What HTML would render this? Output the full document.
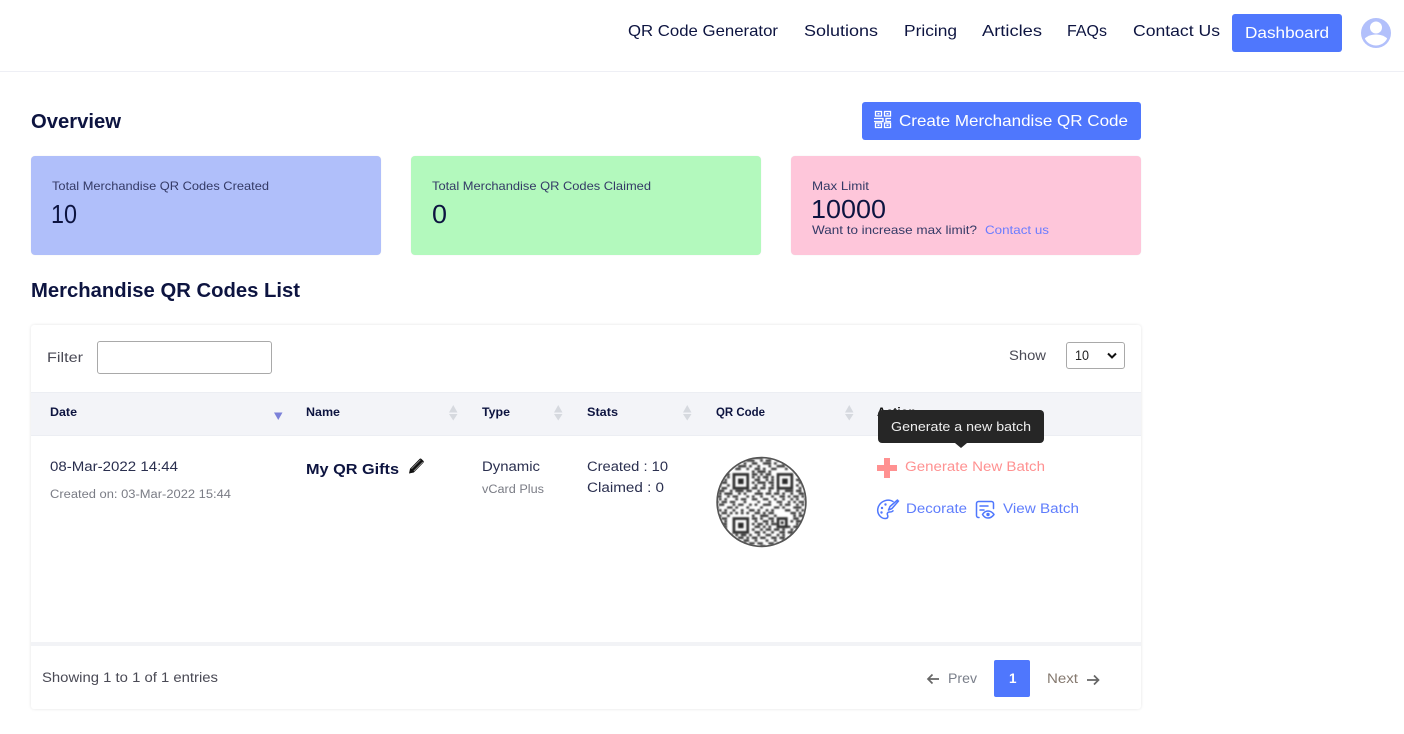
<!DOCTYPE html>
<html lang="en">
<head>
<meta charset="utf-8">
<title>Merchandise QR Codes</title>
<style>
html,body{margin:0;padding:0;background:#fff;width:1404px;height:734px;overflow:hidden}
body{position:relative;font-family:"Liberation Sans",sans-serif}
.b{position:absolute;box-sizing:border-box}
svg.t{position:absolute;left:0;top:0}
svg.t text{font-family:"Liberation Sans",sans-serif}
</style>
</head>
<body>
<div class="b" style="left:0;top:71px;width:1404px;height:1px;background:#eeeff5"></div>
<div class="b" style="left:1232px;top:14px;width:110px;height:38px;background:#4f77fd;border-radius:3px"></div>
<div class="b" style="left:862px;top:102px;width:279px;height:38px;background:#4f77fd;border-radius:3px"></div>
<div class="b" style="left:31px;top:156px;width:350px;height:99px;background:#b0bffa;border-radius:4px;box-shadow:0 0 1px #e4e4e4"></div>
<div class="b" style="left:411px;top:156px;width:350px;height:99px;background:#b3f9bd;border-radius:4px;box-shadow:0 0 1px #e4e4e4"></div>
<div class="b" style="left:791px;top:156px;width:350px;height:99px;background:#fec6da;border-radius:4px;box-shadow:0 0 1px #e4e4e4"></div>
<div class="b" style="left:31px;top:325px;width:1110px;height:384px;background:#fff;border-radius:3px;box-shadow:0 0 3px rgba(0,0,0,.11)"></div>
<div class="b" style="left:97px;top:341px;width:175px;height:33px;border:1px solid #a9a9a9;border-radius:3px;background:#fff"></div>
<div class="b" style="left:1066px;top:342px;width:59px;height:27px;border:1px solid #a9a9a9;border-radius:3px;background:#fff"></div>
<div class="b" style="left:31px;top:392px;width:1110px;height:44px;background:#f3f4f8;border-top:1px solid #eceef3;border-bottom:1px solid #eceef3"></div>
<div class="b" style="left:31px;top:642px;width:1110px;height:4px;background:#f2f3f6"></div>
<div class="b" style="left:994px;top:660px;width:36px;height:37px;background:#4f77fd;border-radius:2px"></div>

<svg class="t" width="1404" height="734" viewBox="0 0 1404 734" xmlns="http://www.w3.org/2000/svg">
<!-- nav -->
<g font-size="16" fill="#0d1440">
<text x="628" y="36" textLength="150" lengthAdjust="spacingAndGlyphs">QR Code Generator</text>
<text x="804" y="36" textLength="74" lengthAdjust="spacingAndGlyphs">Solutions</text>
<text x="904" y="36" textLength="53" lengthAdjust="spacingAndGlyphs">Pricing</text>
<text x="982" y="36" textLength="60" lengthAdjust="spacingAndGlyphs">Articles</text>
<text x="1067" y="36" textLength="40" lengthAdjust="spacingAndGlyphs">FAQs</text>
<text x="1133" y="36" textLength="87" lengthAdjust="spacingAndGlyphs">Contact Us</text>
</g>
<text x="1245" y="38" font-size="16" fill="#fff" textLength="84" lengthAdjust="spacingAndGlyphs">Dashboard</text>
<!-- avatar -->
<defs><clipPath id="av"><circle cx="1376" cy="33" r="12.500"/></clipPath></defs>
<circle cx="1376" cy="33" r="15" fill="#b2c0fb"/>
<circle cx="1376" cy="27.500" r="6" fill="#fff"/>
<path d="M1362 48v-5c2-6 8-8.500 14-8.500s12 2.500 14 8.500v5z" fill="#fff" clip-path="url(#av)"/>

<!-- create button -->
<g fill="none" stroke="#fff" stroke-width="1.300">
<rect x="875.500" y="111.500" width="6" height="4.500"/><rect x="884.500" y="111.500" width="6" height="4.500"/>
<rect x="875.500" y="123" width="6" height="4.500"/><rect x="884.500" y="123" width="6" height="4.500"/>
<path d="M874 118.500h9v3h-9M891 118.500h-5v3h5"/>
</g>
<g fill="#fff"><rect x="877.500" y="113" width="2" height="1.500"/><rect x="886.500" y="113" width="2" height="1.500"/><rect x="877.500" y="124.500" width="2" height="1.500"/><rect x="886.500" y="124.500" width="2" height="1.500"/></g>
<text x="899" y="126" font-size="16" fill="#fff" textLength="229" lengthAdjust="spacingAndGlyphs">Create Merchandise QR Code</text>

<!-- headings -->
<text x="31" y="128" font-size="20" font-weight="bold" fill="#0d1440" textLength="90" lengthAdjust="spacingAndGlyphs">Overview</text>
<text x="31" y="297" font-size="20" font-weight="bold" fill="#0d1440" textLength="269" lengthAdjust="spacingAndGlyphs">Merchandise QR Codes List</text>

<!-- cards -->
<g font-size="12" fill="#343a66">
<text x="52" y="190" textLength="217" lengthAdjust="spacingAndGlyphs">Total Merchandise QR Codes Created</text>
<text x="432" y="190" textLength="219" lengthAdjust="spacingAndGlyphs">Total Merchandise QR Codes Claimed</text>
<text x="812" y="190" textLength="57" lengthAdjust="spacingAndGlyphs">Max Limit</text>
<text x="812" y="234" textLength="165" lengthAdjust="spacingAndGlyphs">Want to increase max limit?</text>
</g>
<text x="985" y="234" font-size="12" fill="#6a7cff" textLength="64" lengthAdjust="spacingAndGlyphs">Contact us</text>
<g font-size="26" fill="#0d1440">
<text x="51" y="223" textLength="26" lengthAdjust="spacingAndGlyphs">10</text>
<text x="432" y="223" textLength="15" lengthAdjust="spacingAndGlyphs">0</text>
<text x="811" y="218" textLength="75" lengthAdjust="spacingAndGlyphs">10000</text>
</g>

<!-- filter / show -->
<text x="47" y="362" font-size="13.500" fill="#4a4a55" textLength="36" lengthAdjust="spacingAndGlyphs">Filter</text>
<text x="1009" y="360" font-size="13.500" fill="#4a4a55" textLength="37" lengthAdjust="spacingAndGlyphs">Show</text>
<text x="1075" y="360" font-size="13.500" fill="#222" textLength="14" lengthAdjust="spacingAndGlyphs">10</text>
<path d="M1108 353.500l4 4 4-4" fill="none" stroke="#111" stroke-width="2"/>

<!-- table head -->
<g font-size="11.500" font-weight="bold" fill="#0d1440">
<text x="50" y="416" textLength="27" lengthAdjust="spacingAndGlyphs">Date</text>
<text x="306" y="416" textLength="34" lengthAdjust="spacingAndGlyphs">Name</text>
<text x="482" y="416" textLength="28" lengthAdjust="spacingAndGlyphs">Type</text>
<text x="587" y="416" textLength="31" lengthAdjust="spacingAndGlyphs">Stats</text>
<text x="716" y="416" textLength="49" lengthAdjust="spacingAndGlyphs">QR Code</text>
<text x="877" y="416" fill="#111" textLength="39" lengthAdjust="spacingAndGlyphs">Action</text>
</g>
<path d="M274 412.500h8.500l-4.250 7.500z" fill="#7b81d9"/>
<g fill="#d6d9df">
<path d="M449 412.500h8.500l-4.250-7.500zM449 414h8.500l-4.250 6.500z"/>
<path d="M554 412.500h8.500l-4.250-7.500zM554 414h8.500l-4.250 6.500z"/>
<path d="M683 412.500h8.500l-4.250-7.500zM683 414h8.500l-4.250 6.500z"/>
<path d="M845 412.500h8.500l-4.250-7.500zM845 414h8.500l-4.250 6.500z"/>
</g>

<!-- row -->
<text x="50" y="471" font-size="13.500" fill="#2a2f4f" textLength="128" lengthAdjust="spacingAndGlyphs">08-Mar-2022 14:44</text>
<text x="50" y="498" font-size="11.500" fill="#7a7c85" textLength="181" lengthAdjust="spacingAndGlyphs">Created on: 03-Mar-2022 15:44</text>
<text x="306" y="474" font-size="15" font-weight="bold" fill="#0d1440" textLength="93" lengthAdjust="spacingAndGlyphs">My QR Gifts</text>
<path d="M409 473.500l1-4.800 9.500-9.700a1.400 1.400 0 0 1 2 0l1.800 1.800a1.400 1.400 0 0 1 0 2l-9.500 9.700z" fill="#111"/>
<path d="M411.500 468.800l9-9M413.800 471l9-9" stroke="#fff" stroke-width=".6" opacity=".7"/>
<text x="482" y="471" font-size="13.500" fill="#2a2f4f" textLength="58" lengthAdjust="spacingAndGlyphs">Dynamic</text>
<text x="482" y="493" font-size="11.500" fill="#7a7c85" textLength="62" lengthAdjust="spacingAndGlyphs">vCard Plus</text>
<text x="587" y="471" font-size="13.500" fill="#2a2f4f" textLength="81" lengthAdjust="spacingAndGlyphs">Created : 10</text>
<text x="587" y="492" font-size="13.500" fill="#2a2f4f" textLength="77" lengthAdjust="spacingAndGlyphs">Claimed : 0</text>

<!-- QR -->
<defs>
<clipPath id="qc"><circle cx="16.500" cy="16.500" r="16.300"/></clipPath>
<filter id="qb" x="-5%" y="-5%" width="110%" height="110%"><feGaussianBlur stdDeviation=".3"/></filter>
</defs>
<svg x="716" y="456" width="91" height="92" viewBox="0 0 33 33">
<g clip-path="url(#qc)" filter="url(#qb)">
<path stroke="#3a3a3a" stroke-width=".85" fill="none" d="
M10 .5h2M14 .5h3M19 .5h2M23 .5h1
M8 1.500h1M11 1.500h3M16 1.500h1M18 1.500h2M22 1.500h2M26 1.500h1
M6 2.500h2M10 2.500h1M13 2.500h2M17 2.500h3M21 2.500h1M24 2.500h2
M5 3.500h1M8 3.500h3M12 3.500h1M15 3.500h1M19 3.500h1M22 3.500h3M27 3.500h1
M4 4.500h1M7 4.500h2M11 4.500h1M14 4.500h2M17 4.500h1M20 4.500h2M25 4.500h1M28 4.500h1
M3 5.500h1M13 5.500h1M15 5.500h3M19 5.500h1M29 5.500h1
M3 6.500h2M13 6.500h2M16 6.500h1M18 6.500h2M29 6.500h1
M2 7.500h1M4 7.500h1M13 7.500h1M15 7.500h1M17 7.500h2M20 7.500h1M30 7.500h1
M3 8.500h1M14 8.500h2M18 8.500h1M20 8.500h1M29 8.500h2
M2 9.500h2M13 9.500h1M15 9.500h3M19 9.500h2M30 9.500h1
M1 10.500h1M4 10.500h1M14 10.500h1M17 10.500h1M20 10.500h1M29 10.500h1M31 10.500h1
M2 11.500h2M13 11.500h2M16 11.500h2M19 11.500h2M30 11.500h1
M1 12.500h2M5 12.500h1M7 12.500h3M11 12.500h2M15 12.500h1M19 12.500h1M22 12.500h1M25 12.500h3M29 12.500h2
M1 13.500h1M3 13.500h3M8 13.500h1M10 13.500h1M14 13.500h3M18 13.500h2M21 13.500h2M24 13.500h1M27 13.500h1M30 13.500h2
M0 14.500h2M4 14.500h1M6 14.500h2M11 14.500h1M13 14.500h1M16 14.500h1M20 14.500h1M23 14.500h2M26 14.500h1M28 14.500h2M31 14.500h1
M1 15.500h1M3 15.500h1M7 15.500h1M9 15.500h2M13 15.500h2M17 15.500h2M21 15.500h1M24 15.500h1M27 15.500h1M29 15.500h1M32 15.500h1
M0 16.500h1M2 16.500h2M5 16.500h2M10 16.500h1M15 16.500h1M19 16.500h1M22 16.500h2M26 16.500h1M28 16.500h1M30 16.500h2
M1 17.500h2M6 17.500h1M8 17.500h2M12 17.500h1M14 17.500h1M17 17.500h3M23 17.500h1M25 17.500h2M29 17.500h1M31 17.500h1
M0 18.500h1M4 18.500h2M7 18.500h1M11 18.500h1M16 18.500h1M21 18.500h2M24 18.500h1M28 18.500h3
M1 19.500h1M3 19.500h1M6 19.500h1M9 19.500h1M12 19.500h2M15 19.500h1M18 19.500h1M20 19.500h1M25 19.500h2M29 19.500h1M31 19.500h1
M2 20.500h2M5 20.500h1M7 20.500h1M9 20.500h1M11 20.500h1M14 20.500h2M17 20.500h1M19 20.500h2M27 20.500h2M30 20.500h1
M1 21.500h1M4 21.500h1M13 21.500h1M16 21.500h3M21 21.500h1M28 21.500h1M30 21.500h2
M2 22.500h2M13 22.500h2M16 22.500h1M19 22.500h2M28 22.500h2
M1 23.500h1M3 23.500h1M14 23.500h1M17 23.500h2M20 23.500h1M27 23.500h1M29 23.500h2
M2 24.500h2M13 24.500h1M15 24.500h2M18 24.500h1M20 24.500h2M29 24.500h1
M3 25.500h1M14 25.500h2M17 25.500h1M19 25.500h1M22 25.500h1M25 25.500h2M28 25.500h2
M2 26.500h2M13 26.500h1M16 26.500h1M18 26.500h2M21 26.500h2M24 26.500h1M27 26.500h1M29 26.500h1
M3 27.500h1M14 27.500h2M17 27.500h1M20 27.500h1M23 27.500h2M26 27.500h2
M4 28.500h2M7 28.500h1M9 28.500h2M12 28.500h1M15 28.500h1M18 28.500h2M22 28.500h1M24 28.500h1M27 28.500h1
M5 29.500h1M8 29.500h2M11 29.500h1M13 29.500h2M16 29.500h2M20 29.500h2M23 29.500h2M26 29.500h1
M7 30.500h1M10 30.500h2M14 30.500h1M18 30.500h1M21 30.500h1M24 30.500h1
M9 31.500h2M12 31.500h2M15 31.500h2M19 31.500h2M22 31.500h1
M12 32.500h1M16 32.500h2M20 32.500h1"/>
<g fill="none" stroke="#333"><rect x="6.500" y="6.500" width="5" height="5"/><rect x="22.500" y="6.500" width="5" height="5"/><rect x="6.500" y="22.500" width="5" height="5"/><rect x="22.500" y="22.500" width="3" height="3"/></g>
<g fill="#2c2c2c"><rect x="8" y="8" width="2" height="2"/><rect x="24" y="8" width="2" height="2"/><rect x="8" y="24" width="2" height="2"/><rect x="23.500" y="23.500" width="1" height="1"/></g>
</g>
<circle cx="16.500" cy="16.500" r="16.100" fill="none" stroke="#555" stroke-width=".6"/>
</svg>

<!-- actions -->
<path d="M884 458h6v7h7v6h-7v7h-6v-7h-7v-6h7z" fill="#ff9191"/>
<text x="905" y="471" font-size="13.500" fill="#ff9191" textLength="140" lengthAdjust="spacingAndGlyphs">Generate New Batch</text>
<g fill="none" stroke="#4f77fd" stroke-width="1.500" stroke-linecap="round" stroke-linejoin="round">
<path d="M893 501.500c-2-1.200-5-1.800-8-.8-4.500 1.500-7.500 5.500-7.300 10 .2 4.500 4 8 7.800 7.800 2.400-.1 2.700-2 2-3.500-.7-1.600.2-3 2-3 1.300 0 2.700-.2 3.500-1.200"/>
<path d="M897.500 500l-7.500 6.500-1.500 3.500 3.500-1.500 6.500-7.500"/>
<path d="M979 517.500h-.5a2 2 0 0 1-2-2v-12a2 2 0 0 1 2-2h13a2 2 0 0 1 2 2v5"/>
<path d="M980 506h8M980 510h4"/>
<path d="M982.500 514.500c1.500-2.500 3.500-3.500 5.500-3.500s4.200 1 6 3.500c-1.800 2.500-4 3.500-6 3.500s-4-1-5.500-3.500z"/>
</g>
<g fill="#4f77fd"><circle cx="882" cy="508" r="1.200"/><circle cx="885.500" cy="504.500" r="1.200"/><circle cx="881.500" cy="512.500" r="1.200"/><circle cx="988" cy="514.500" r="1.700"/></g>
<text x="906" y="513" font-size="13.500" fill="#5f7dfc" textLength="61" lengthAdjust="spacingAndGlyphs">Decorate</text>
<text x="1003" y="513" font-size="13.500" fill="#5f7dfc" textLength="76" lengthAdjust="spacingAndGlyphs">View Batch</text>

<!-- tooltip -->
<rect x="878" y="410" width="166" height="33" rx="4" fill="#262626"/>
<path d="M955 443h12l-6 5z" fill="#262626"/>
<text x="891" y="431" font-size="13" fill="#eee" textLength="140" lengthAdjust="spacingAndGlyphs">Generate a new batch</text>

<!-- footer -->
<text x="42" y="682" font-size="13.500" fill="#4a4a55" textLength="176" lengthAdjust="spacingAndGlyphs">Showing 1 to 1 of 1 entries</text>
<path d="M939 679h-11M932.500 674.500l-4.500 4.500 4.500 4.500" fill="none" stroke="#666" stroke-width="1.700"/>
<text x="948" y="683" font-size="13.500" fill="#7a7f8a" textLength="29" lengthAdjust="spacingAndGlyphs">Prev</text>
<text x="1009" y="683" font-size="13.500" font-weight="bold" fill="#fff">1</text>
<text x="1047" y="683" font-size="13.500" fill="#85796f" textLength="31" lengthAdjust="spacingAndGlyphs">Next</text>
<path d="M1087 680h11M1094 675.500l4.500 4.500-4.500 4.500" fill="none" stroke="#666" stroke-width="1.700"/>
</svg>
</body>
</html>
